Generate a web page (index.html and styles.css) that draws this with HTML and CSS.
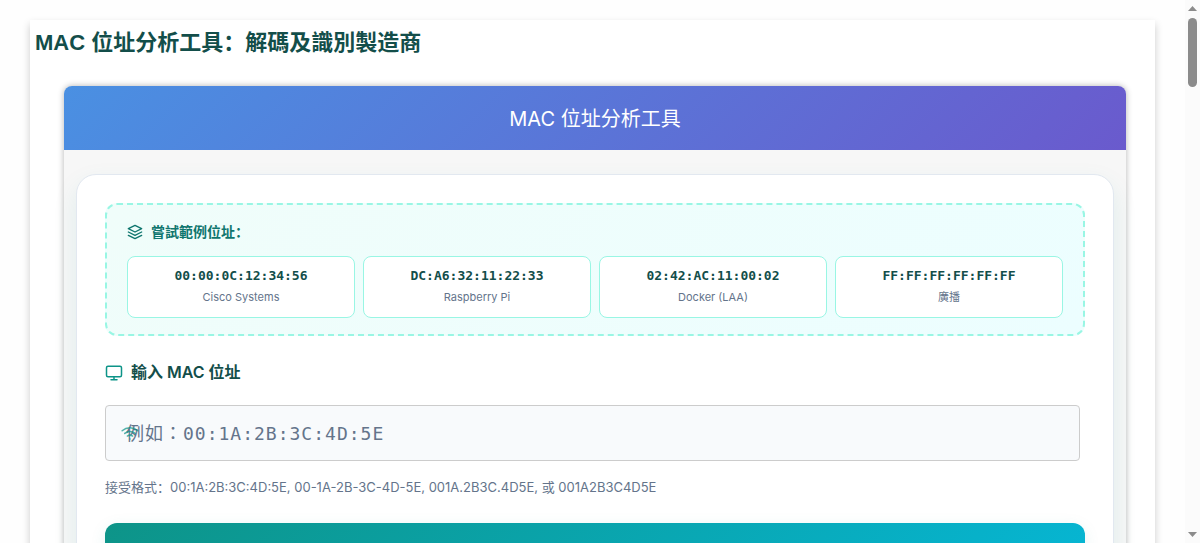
FILE: index.html
```html
<!DOCTYPE html>
<html lang="zh">
<head>
  <meta charset="UTF-8">
  <meta name="viewport" content="width=device-width, initial-scale=1.0">
  <title>MAC 位址分析工具</title>
  <link rel="stylesheet" href="styles.css">
</head>
<body>
  <div class="page">
    <main class="container">
      <h1 class="title">MAC 位址分析工具：解碼及識別製造商</h1>

      <div class="tool">
        <h2 class="tool-header">MAC 位址分析工具</h2>
        <div class="tool-body">
          <div class="card">
            <div class="examples">
              <div class="examples-title">
                <svg class="icon-small" viewBox="0 0 24 24"><path d="M12 2L2 7l10 5 10-5-10-5z"/><path d="M2 17l10 5 10-5"/><path d="M2 12l10 5 10-5"/></svg>
                嘗試範例位址：
              </div>
              <div class="examples-grid">
                <button class="example"><span class="mac">00:00:0C:12:34:56</span><span class="vendor">Cisco Systems</span></button>
                <button class="example"><span class="mac">DC:A6:32:11:22:33</span><span class="vendor">Raspberry Pi</span></button>
                <button class="example"><span class="mac">02:42:AC:11:00:02</span><span class="vendor">Docker (LAA)</span></button>
                <button class="example"><span class="mac">FF:FF:FF:FF:FF:FF</span><span class="vendor">廣播</span></button>
              </div>
            </div>

            <label class="label" for="mac-input">
              <svg class="icon" viewBox="0 0 24 24"><rect x="2" y="3" width="20" height="14" rx="2"/><path d="M8 21h8M12 17v4"/></svg>
              輸入 MAC 位址
            </label>
            <div class="input-wrap">
              <input type="text" id="mac-input" class="input" lang="ja" placeholder="例如：00:1A:2B:3C:4D:5E">
              <svg class="input-icon" viewBox="0 0 24 24"><path d="M1.5 9a16 16 0 0 1 21 0"/><path d="M5 12.6a11 11 0 0 1 14 0"/><path d="M8.5 16.1a6 6 0 0 1 7 0"/><path d="M12 20h.01"/></svg>
            </div>
            <p class="hint">接受格式：00:1A:2B:3C:4D:5E, 00-1A-2B-3C-4D-5E, 001A.2B3C.4D5E, 或 001A2B3C4D5E</p>

            <button class="analyze" aria-label="分析"></button>
          </div>
        </div>
      </div>
    </main>
  </div>

  <div class="scrollbar">
    <svg class="arrow" viewBox="0 0 9 5"><path d="M0 5L4.5 0L9 5z"/></svg>
    <div class="track"><div class="thumb"></div></div>
    <svg class="arrow" viewBox="0 0 9 5"><path d="M0 0L4.5 5L9 0z"/></svg>
  </div>
</body>
</html>
```
FILE: styles.css
```css
* {
  box-sizing: border-box;
}
body {
  margin: 0;
  height: 100vh;
  display: flex;
  overflow: hidden;
  background-color: #fefefe;
  font-family: Inter, 'Noto Sans CJK SC', sans-serif;
  color: #134e4a;
}
button {
  font-family: inherit;
  cursor: pointer;
}
.page {
  flex: 1;
  padding: 20px 30px;
  overflow: hidden;
}
.container {
  padding: 5px 0 40px 5px;
  background-color: #fff;
  box-shadow: 0 4px 8px rgba(0, 0, 0, 0.2);
}
.title {
  margin: 0;
  font-size: 22px;
  line-height: 35px;
  font-weight: 600;
  font-family: 'Liberation Sans', 'Noto Sans CJK SC', sans-serif;
}
.tool {
  margin: 26px 29px 0;
  border-radius: 8px;
  background-color: #f7f7f7;
  box-shadow: 0 0 6px rgba(0, 0, 0, 0.3);
}
.tool-header {
  margin: 0;
  padding: 18px 20px 16px;
  border-radius: 8px 8px 0 0;
  background: linear-gradient(135deg, #4a90e2, #6a5acd);
  color: #fff;
  font-size: 20px;
  line-height: 30px;
  font-weight: normal;
  text-align: center;
}
.tool-body {
  padding: 24px 12px;
}
.card {
  padding: 28px;
  border: 1px solid #e2e8f0;
  border-radius: 20px;
  background-color: #fff;
  box-shadow: 0 10px 24px rgba(13, 148, 136, 0.1);
}
.examples {
  padding: 16px 20px;
  border: 2px dashed #99f6e4;
  border-radius: 12px;
  background: linear-gradient(135deg, #f0fdfa, #ecfeff);
}
.examples-title {
  display: flex;
  align-items: center;
  gap: 8px;
  margin-bottom: 13px;
  color: #0f766e;
  font-size: 14px;
  line-height: 22px;
  font-weight: 600;
}
.examples-grid {
  display: grid;
  grid-template-columns: repeat(4, 1fr);
  gap: 8px;
}
.example {
  display: flex;
  flex-direction: column;
  align-items: center;
  padding: 9px 12px;
  border: 1px solid #99f6e4;
  border-radius: 8px;
  background-color: #fff;
}
.mac {
  color: #134e4a;
  font-family: 'DejaVu Sans Mono', monospace;
  font-size: 13px;
  line-height: 20px;
  font-weight: 600;
}
.vendor {
  color: #64748b;
  font-size: 11px;
  line-height: 22px;
}
.icon, .icon-small, .input-icon {
  fill: none;
  stroke: currentColor;
  stroke-width: 2;
  stroke-linecap: round;
  stroke-linejoin: round;
}
.icon-small {
  width: 16px;
  height: 16px;
}
.icon {
  width: 18px;
  height: 18px;
  color: #0d9488;
}
.label {
  display: flex;
  align-items: center;
  gap: 8px;
  margin: 24px 0 20px;
  font-size: 16px;
  line-height: 25px;
  font-weight: 600;
}
.input-wrap {
  position: relative;
  margin-right: 5px;
}
.input {
  display: block;
  width: 100%;
  height: 56px;
  padding: 0 20px;
  border: 1px solid #ccc;
  border-radius: 4px;
  background-color: #f8fafc;
  color: #134e4a;
  font-family: 'DejaVu Sans Mono', 'Noto Sans CJK JP', monospace;
  font-size: 18px;
  letter-spacing: 1px;
}
.input::placeholder {
  color: #64748b;
  opacity: 1;
}
.input-icon {
  position: absolute;
  left: 16px;
  top: 19px;
  width: 18px;
  height: 18px;
  color: #0d9488;
  opacity: 0.7;
}
.hint {
  margin: 15px 0 24px;
  color: #64748b;
  font-size: 13px;
  line-height: 23px;
}
.analyze {
  width: 100%;
  height: 56px;
  border: none;
  border-radius: 12px;
  background: linear-gradient(135deg, #0d9488, #06b6d4);
  box-shadow: 0 4px 16px rgba(13, 148, 136, 0.1);
}
.scrollbar {
  width: 15px;
  display: flex;
  flex-direction: column;
  align-items: center;
  gap: 7px;
  padding: 6px 0;
  background-color: #fbfbfb;
}
.arrow {
  width: 9px;
  height: 5px;
  fill: #8b8b8b;
}
.track {
  flex: 1;
}
.thumb {
  width: 9px;
  height: 69px;
  border-radius: 5px;
  background-color: #8b8b8b;
}
```
